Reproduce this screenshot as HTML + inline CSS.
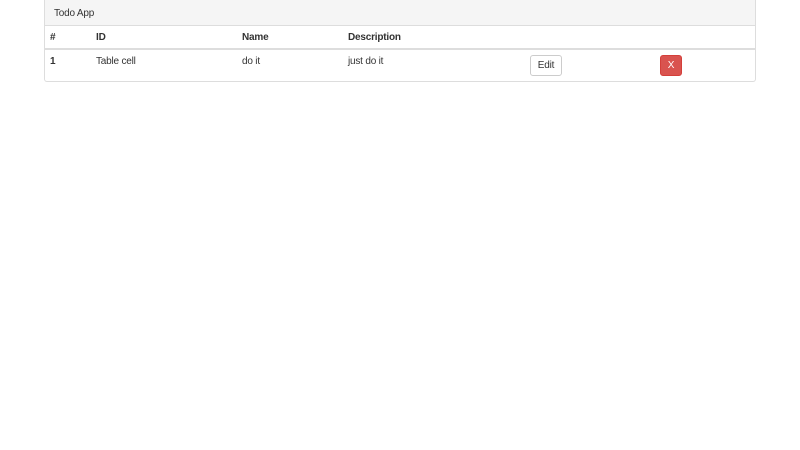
<!DOCTYPE html>
<html><head><style>
body{margin:0;background:#fff;font-family:"Liberation Sans",sans-serif;font-size:10px;letter-spacing:-0.2px;color:#333}
.panel{position:absolute;left:44px;top:0;width:710px;height:81px;border:1px solid #ddd;border-top:none;border-radius:0 0 3px 3px}
.head{height:25px;background:#f5f5f5;border-bottom:1px solid #ddd;line-height:27px;padding-left:9px}
.t{position:absolute;white-space:nowrap}
.b{font-weight:bold}
.line{position:absolute;left:0;right:0;top:48px;height:2px;background:#ddd}
.btn{position:absolute;top:55px;height:21px;border-radius:3px;box-sizing:border-box;line-height:20px;text-align:center}
</style></head><body>
<div class="panel">
<div class="head">Todo App</div>
<div class="line"></div>
<div class="t b" style="left:5px;top:32px">#</div>
<div class="t b" style="left:51px;top:32px">ID</div>
<div class="t b" style="left:197px;top:32px">Name</div>
<div class="t b" style="left:303px;top:32px">Description</div>
<div class="t b" style="left:5px;top:56px">1</div>
<div class="t" style="left:51px;top:56px">Table cell</div>
<div class="t" style="left:197px;top:56px">do it</div>
<div class="t" style="left:303px;top:56px">just do it</div>
<div class="btn" style="left:485px;width:32px;border:1px solid #ccc;background:#fff">Edit</div>
<div class="btn" style="left:615px;width:22px;border:1px solid #d43f3a;background:#d9534f;color:#fff">X</div>
</div>
</body></html>
